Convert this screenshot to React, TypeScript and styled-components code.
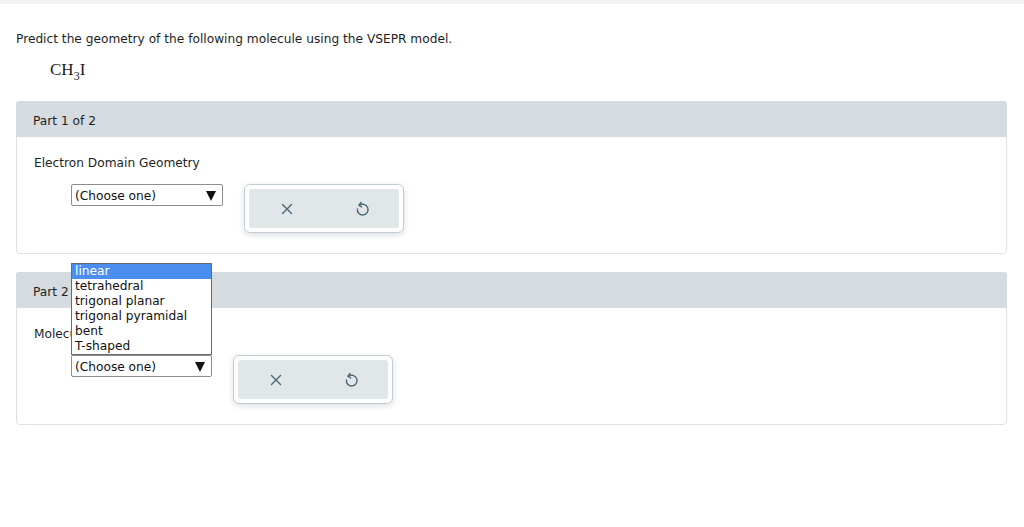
import React from 'react';
import styled, { createGlobalStyle } from 'styled-components';

const GlobalStyle = createGlobalStyle`
  html, body {
    margin: 0;
    padding: 0;
    background: #ffffff;
  }
  body {
    font-family: "DejaVu Sans", Verdana, sans-serif;
    font-size: 12.2px;
    color: #1e1e1e;
  }
`;

const TopStrip = styled.div`
  height: 4px;
  background: #f1f2f4;
`;

const Page = styled.div`
  padding: 27px 17px 0 16px;
`;

const Question = styled.div`
  line-height: 16px;
`;

const Formula = styled.div`
  font-family: "Liberation Serif", "Times New Roman", serif;
  font-size: 17px;
  line-height: 20px;
  margin: 13px 0 0 34px;
  sub {
    font-size: 12px;
    vertical-align: -5px;
    line-height: 0;
  }
`;

const Panel = styled.section<{ $gap: number }>`
  margin-top: ${(p) => p.$gap}px;
  border: 1px solid #dde2e5;
  border-radius: 4px;
`;

const PanelHeader = styled.div`
  height: 36px;
  background: #d5dbdf;
  border-radius: 3px 3px 0 0;
  display: flex;
  align-items: center;
  padding: 3px 0 0 17px;
  margin: -1px -1px 0 -1px;
  box-sizing: border-box;
`;

const PanelBody = styled.div`
  padding: 18px 17px 20px 17px;
`;

const Label = styled.div`
  line-height: 16px;
`;

const AnswerRow = styled.div`
  display: flex;
  align-items: flex-start;
  gap: 21px;
  margin: 13px 0 0 37px;
`;

const SelectWrap = styled.div`
  position: relative;
`;

const SelectBox = styled.div<{ $width: number }>`
  width: ${(p) => p.$width}px;
  height: 22px;
  box-sizing: border-box;
  border: 1px solid #8d8d8d;
  border-radius: 2px;
  display: flex;
  align-items: center;
  justify-content: space-between;
  padding: 1px 6px 0 3px;
  background: #fff;
  color: #111;
`;

const Caret = styled.span`
  width: 0;
  height: 0;
  border-left: 5px solid transparent;
  border-right: 5px solid transparent;
  border-top: 10px solid #111;
`;

const OptionList = styled.ul`
  position: absolute;
  left: 0;
  bottom: 100%;
  margin: 0;
  padding: 0;
  list-style: none;
  width: 100%;
  box-sizing: border-box;
  border: 1px solid #6a6a6a;
  background: #fff;
  z-index: 5;
`;

const Option = styled.li<{ $active?: boolean }>`
  height: 15px;
  line-height: 15px;
  padding-left: 3px;
  background: ${(p) => (p.$active ? '#4a8ff0' : 'transparent')};
  color: ${(p) => (p.$active ? '#ffffff' : '#111111')};
  white-space: nowrap;
`;

const ToolGroup = styled.div`
  width: 160px;
  height: 49px;
  box-sizing: border-box;
  border: 1px solid #c3ccd1;
  border-radius: 6px;
  padding: 4px;
  background: #fff;
  box-shadow: 0 2px 6px rgba(60, 80, 90, 0.18);
`;

const ToolInner = styled.div`
  height: 100%;
  display: flex;
  background: #e1e6e9;
  border-radius: 3px;
`;

const ToolButton = styled.button`
  flex: 1;
  border: none;
  background: transparent;
  padding: 0;
  display: flex;
  align-items: center;
  justify-content: center;
  color: #4b6674;
  cursor: pointer;
`;

const CloseIcon = () => (
  <svg width="12" height="12" viewBox="0 0 12 12" fill="none">
    <path d="M1.5 1.5 L10.5 10.5 M10.5 1.5 L1.5 10.5" stroke="currentColor" strokeWidth="1.4" strokeLinecap="round" />
  </svg>
);

const UndoIcon = () => (
  <svg width="16" height="16" viewBox="0 0 15 15" fill="none">
    <path d="M5 4.2 A5 5 0 1 1 3.2 7.4" stroke="currentColor" strokeWidth="1.3" strokeLinecap="round" />
    <path d="M6.6 1.4 L4.6 4 L7.2 5.6" stroke="currentColor" strokeWidth="1.3" strokeLinecap="round" strokeLinejoin="round" />
  </svg>
);

const options = ['linear', 'tetrahedral', 'trigonal planar', 'trigonal pyramidal', 'bent', 'T-shaped'];

interface PartProps {
  title: string;
  label: string;
  selectWidth: number;
  open?: boolean;
  gap: number;
}

const Part = ({ title, label, selectWidth, open, gap }: PartProps) => (
  <Panel $gap={gap}>
    <PanelHeader>{title}</PanelHeader>
    <PanelBody>
      <Label>{label}</Label>
      <AnswerRow>
        <SelectWrap>
          {open && (
            <OptionList>
              {options.map((o, i) => (
                <Option key={o} $active={i === 0}>
                  {o}
                </Option>
              ))}
            </OptionList>
          )}
          <SelectBox $width={selectWidth}>
            <span>(Choose one)</span>
            <Caret />
          </SelectBox>
        </SelectWrap>
        <ToolGroup>
          <ToolInner>
            <ToolButton aria-label="clear">
              <CloseIcon />
            </ToolButton>
            <ToolButton aria-label="undo">
              <UndoIcon />
            </ToolButton>
          </ToolInner>
        </ToolGroup>
      </AnswerRow>
    </PanelBody>
  </Panel>
);

export default function App() {
  return (
    <>
      <GlobalStyle />
      <TopStrip />
      <Page>
        <Question>Predict the geometry of the following molecule using the VSEPR model.</Question>
        <Formula>
          CH<sub>3</sub>I
        </Formula>
        <Part title="Part 1 of 2" label="Electron Domain Geometry" selectWidth={152} gap={21} />
        <Part title="Part 2 of 2" label="Molecular Geometry" selectWidth={141} gap={18} open />
      </Page>
    </>
  );
}
